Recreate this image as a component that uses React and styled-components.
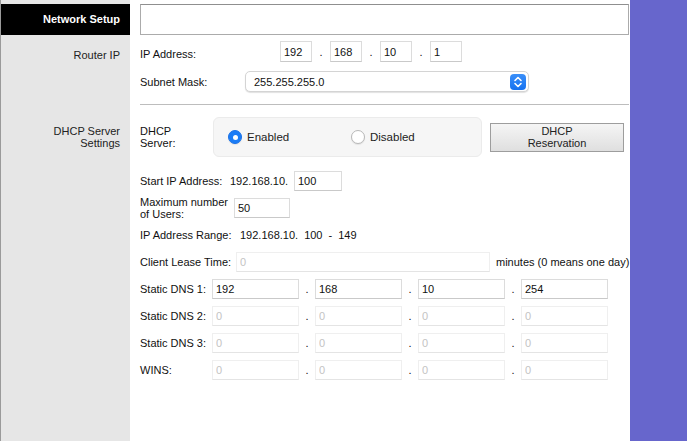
import React from "react";
import styled, { createGlobalStyle } from "styled-components";

const GlobalStyle = createGlobalStyle`
  * { box-sizing: border-box; }
  html, body { margin: 0; padding: 0; }
  body {
    font-family: "Liberation Sans", Arial, Helvetica, sans-serif;
    font-size: 11px;
    color: #111;
    background: #fff;
  }
`;

const Frame = styled.div`
  display: grid;
  grid-template-columns: 129px 500px 1fr;
  grid-template-rows: 35px auto 1fr;
  height: 441px;
  border-left: 1px solid #9a9a9a;
`;

const HeaderSide = styled.div`
  grid-column: 1;
  background: #e6e6e6;
  padding-top: 4px;
`;

const SectionTab = styled.div`
  height: 31px;
  line-height: 31px;
  background: #000;
  color: #fff;
  font-weight: bold;
  text-align: right;
  padding-right: 10px;
`;

const Side = styled.div`
  grid-column: 1;
  background: #e6e6e6;
  padding: ${p => p.$top}px 10px 0 0;
  text-align: right;
  line-height: 12px;
  color: #222;
`;

const Main = styled.div`
  grid-column: 2;
  padding: ${p => p.$top}px 1px 0 10px;
  display: flex;
  flex-direction: column;
`;

const Accent = styled.div`
  grid-column: 3;
  grid-row: 1 / span 3;
  background: #6766cc;
`;

const TitleBox = styled.div`
  height: 31px;
  border: 1px solid #ababab;
  border-top-color: #8f8f8f;
  background: #fff;
`;

const Line = styled.div`
  display: flex;
  align-items: center;
  height: ${p => p.$h || 20}px;
  margin-top: ${p => p.$gap || 0}px;
`;

const Label = styled.span`
  width: ${p => p.$w}px;
  flex-shrink: 0;
  line-height: 12px;
  padding-top: ${p => p.$shift || 0}px;
`;

const Field = styled.input`
  width: ${p => p.$w}px;
  height: ${p => p.$h || 20}px;
  flex-shrink: 0;
  margin: 0;
  padding: 0 3px;
  font: inherit;
  color: ${p => (p.$muted ? "#c4c4c4" : "#111")};
  background: #fff;
  border: 1px solid ${p => (p.$muted ? "#efefef" : "#dcdcdc")};
  border-bottom-color: ${p => (p.$muted ? "#e4e4e4" : "#c9c9c9")};
  border-radius: 0;
  outline: none;
`;

const Dot = styled.span`
  width: ${p => p.$w}px;
  flex-shrink: 0;
  text-align: center;
`;

const SelectBox = styled.div`
  width: 284px;
  height: 21px;
  display: flex;
  align-items: center;
  justify-content: space-between;
  padding: 0 2px 0 8px;
  background: #fff;
  border: 1px solid #d4d4d4;
  border-radius: 5px;
  box-shadow: 0 1px 1px rgba(0, 0, 0, 0.12);
`;

const Stepper = styled.span`
  width: 16px;
  height: 16px;
  border-radius: 4px;
  background: linear-gradient(#3a8ff9, #1672f0);
  display: flex;
  align-items: center;
  justify-content: center;
`;

const Divider = styled.div`
  margin-top: 12px;
  border-top: 1px solid #bdbdbd;
`;

const RadioGroup = styled.div`
  width: 269px;
  height: 40px;
  flex-shrink: 0;
  display: flex;
  align-items: center;
  padding-left: 14px;
  background: #f6f6f6;
  border: 1px solid #ebebeb;
  border-radius: 6px;
`;

const RadioOption = styled.label`
  width: 123px;
  display: flex;
  align-items: center;
  gap: 5px;
  font-size: 11.5px;
  color: #222;
`;

const RadioMark = styled.span`
  width: 14px;
  height: 14px;
  border-radius: 50%;
  display: flex;
  align-items: center;
  justify-content: center;
  background: ${p => (p.$on ? "#1b7cf6" : "#fff")};
  border: 1px solid ${p => (p.$on ? "#1b72e8" : "#b8b8b8")};
  box-shadow: 0 1px 1px rgba(0, 0, 0, 0.08);
  &::after {
    content: "";
    display: ${p => (p.$on ? "block" : "none")};
    width: 5px;
    height: 5px;
    border-radius: 50%;
    background: #fff;
  }
`;

const ActionButton = styled.button`
  width: 134px;
  height: 29px;
  margin-left: 8px;
  padding: 0;
  font: inherit;
  line-height: 12px;
  color: #222;
  border: 1px solid #9d9d9d;
  border-radius: 0;
  background: linear-gradient(#f5f5f5, #dfdfdf);
`;

const Range = styled.span`
  display: flex;
  gap: 6px;
`;

const Note = styled.span`
  margin-left: 6px;
  white-space: nowrap;
`;

const ipOctets = ["192", "168", "10", "1"];

const dnsRows = [
  { label: "Static DNS 1:", values: ["192", "168", "10", "254"] },
  { label: "Static DNS 2:", values: ["0", "0", "0", "0"], muted: true },
  { label: "Static DNS 3:", values: ["0", "0", "0", "0"], muted: true },
  { label: "WINS:", values: ["0", "0", "0", "0"], muted: true }
];

const OctetRow = ({ values, width, height, sep, muted }) =>
  values.map((v, i) => (
    <React.Fragment key={i}>
      {i > 0 && <Dot $w={sep}>.</Dot>}
      <Field $w={width} $h={height} $muted={muted} value={v} readOnly />
    </React.Fragment>
  ));

const App = () => (
  <>
    <GlobalStyle />
    <Frame>
      <HeaderSide>
        <SectionTab>Network Setup</SectionTab>
      </HeaderSide>
      <Main $top={4}>
        <TitleBox />
      </Main>
      <Accent />

      <Side $top={14}>Router IP</Side>
      <Main $top={6}>
        <Line $h={21}>
          <Label $w={140} $shift={5}>IP Address:</Label>
          <OctetRow values={ipOctets} width={32} height={21} sep={18} />
        </Line>
        <Line $h={21} $gap={9}>
          <Label $w={105}>Subnet Mask:</Label>
          <SelectBox>
            <span>255.255.255.0</span>
            <Stepper>
              <svg width="12" height="14" viewBox="0 0 12 14" fill="none" stroke="#fff" strokeWidth="1.6" strokeLinecap="round" strokeLinejoin="round">
                <path d="M3 5.5 L6 2.5 L9 5.5" />
                <path d="M3 8.5 L6 11.5 L9 8.5" />
              </svg>
            </Stepper>
          </SelectBox>
        </Line>
        <Divider />
      </Main>

      <Side $top={20}>
        DHCP Server
        <br />
        Settings
      </Side>
      <Main $top={12}>
        <Line $h={40}>
          <Label $w={73}>
            DHCP
            <br />
            Server:
          </Label>
          <RadioGroup>
            <RadioOption>
              <RadioMark $on />
              Enabled
            </RadioOption>
            <RadioOption>
              <RadioMark />
              Disabled
            </RadioOption>
          </RadioGroup>
          <ActionButton>
            DHCP
            <br />
            Reservation
          </ActionButton>
        </Line>
        <Line $gap={14}>
          <Label $w={90}>Start IP Address:</Label>
          <Label $w={64}>192.168.10.</Label>
          <Field $w={48} value="100" readOnly />
        </Line>
        <Line $gap={7}>
          <Label $w={94}>
            Maximum number
            <br />
            of Users:
          </Label>
          <Field $w={56} value="50" readOnly />
        </Line>
        <Line $gap={7}>
          <Label $w={100}>IP Address Range:</Label>
          <Range>
            <span>192.168.10.</span>
            <span>100</span>
            <span>-</span>
            <span>149</span>
          </Range>
        </Line>
        <Line $gap={7}>
          <Label $w={96}>Client Lease Time:</Label>
          <Field $w={254} $muted value="0" readOnly />
          <Note>minutes (0 means one day)</Note>
        </Line>
        {dnsRows.map(row => (
          <Line key={row.label} $gap={7}>
            <Label $w={72}>{row.label}</Label>
            <OctetRow values={row.values} width={87} sep={16} muted={row.muted} />
          </Line>
        ))}
      </Main>
    </Frame>
  </>
);

export default App;
